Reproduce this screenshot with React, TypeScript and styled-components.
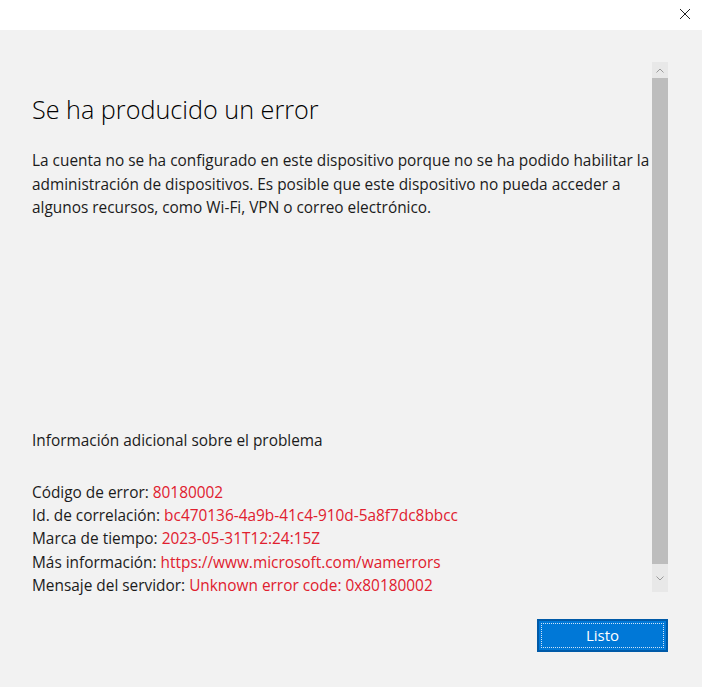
import styled, { createGlobalStyle } from 'styled-components'

const GlobalStyle = createGlobalStyle`
  html, body {
    margin: 0;
    padding: 0;
    background: #f2f2f2;
  }
  body {
    font-family: 'Open Sans', 'Noto Sans', sans-serif;
    color: #1b1b1b;
  }
`

const Window = styled.div`
  width: 702px;
  height: 687px;
  display: flex;
  flex-direction: column;
  background: #f2f2f2;
  overflow: hidden;
`

const TitleBar = styled.div`
  height: 30px;
  flex: none;
  background: #ffffff;
  display: flex;
  justify-content: flex-end;
  align-items: center;
`

const CloseButton = styled.div`
  width: 34px;
  height: 30px;
  display: flex;
  align-items: center;
  justify-content: center;
  padding-bottom: 2px;
  box-sizing: border-box;
`

const Body = styled.div`
  flex: 1;
  display: flex;
  flex-direction: column;
  padding-top: 32px;
`

const ScrollRegion = styled.div`
  height: 540px;
  display: flex;
  align-items: flex-start;
  padding-right: 34px;
`

const Viewport = styled.div`
  flex: 1;
  min-width: 0;
  overflow: hidden;
  padding-left: 32px;
`

const Content = styled.div`
  width: 632px;
  padding-top: 31px;
`

const Heading = styled.h1`
  margin: 0;
  font-family: 'Open Sans', sans-serif;
  font-weight: 300;
  font-size: 25.2px;
  line-height: 32px;
  color: #000;
`

const Paragraph = styled.p`
  margin: 24px 0 0;
  font-size: 15.4px;
  line-height: 23.5px;
  color: #1b1b1b;
`

const Details = styled.div`
  margin-top: 209px;
  font-size: 15.4px;
  line-height: 23.3px;
`

const Subheading = styled.div`
  margin-bottom: 29px;
`

const Row = styled.div`
  white-space: nowrap;
`

const Value = styled.span`
  color: #e0202e;
`

const Scrollbar = styled.div`
  width: 16px;
  height: 530px;
  flex: none;
  display: flex;
  flex-direction: column;
  background: #ebebeb;
`

const Arrow = styled.div<{ $h: number }>`
  height: ${(p) => p.$h}px;
  display: flex;
  align-items: center;
  justify-content: center;
  background: #e8e8e8;
`

const Thumb = styled.div`
  flex: 1;
  background: #bdbdbd;
`

const Footer = styled.div`
  display: flex;
  justify-content: flex-end;
  padding: 17px 34px 0 0;
`

const PrimaryButton = styled.button`
  width: 131px;
  height: 33px;
  padding: 2px;
  border: 2px solid #005aa8;
  background: #0078d7;
  color: #ffffff;
  font-family: 'Open Sans', sans-serif;
  font-size: 15px;
  cursor: pointer;
  box-sizing: border-box;
  display: flex;
`

const FocusRect = styled.span`
  flex: 1;
  border: 1px dotted #cfe3f7;
  display: flex;
  align-items: center;
  justify-content: center;
  padding-bottom: 1px;
`

const rows: [string, string][] = [
  ['Código de error: ', '80180002'],
  ['Id. de correlación: ', 'bc470136-4a9b-41c4-910d-5a8f7dc8bbcc'],
  ['Marca de tiempo: ', '2023-05-31T12:24:15Z'],
  ['Más información: ', 'https://www.microsoft.com/wamerrors'],
  ['Mensaje del servidor: ', 'Unknown error code: 0x80180002'],
]

const App = () => {
  return (
    <>
      <GlobalStyle />
      <Window>
        <TitleBar>
          <CloseButton>
            <svg width="12" height="12" viewBox="0 0 12 12">
              <path d="M1 1 L11 11 M11 1 L1 11" stroke="#222" strokeWidth="1" fill="none" />
            </svg>
          </CloseButton>
        </TitleBar>
        <Body>
          <ScrollRegion>
            <Viewport>
              <Content>
                <Heading>Se ha producido un error</Heading>
                <Paragraph>
                  La cuenta no se ha configurado en este dispositivo porque no se ha podido habilitar la
                  administración de dispositivos. Es posible que este dispositivo no pueda acceder a
                  algunos recursos, como Wi-Fi, VPN o correo electrónico.
                </Paragraph>
                <Details>
                  <Subheading>Información adicional sobre el problema</Subheading>
                  {rows.map(([label, value]) => (
                    <Row key={label}>
                      {label}
                      <Value>{value}</Value>
                    </Row>
                  ))}
                </Details>
              </Content>
            </Viewport>
            <Scrollbar>
              <Arrow $h={16}>
                <svg width="8" height="5" viewBox="0 0 8 5">
                  <path d="M0.5 4.5 L4 1 L7.5 4.5" stroke="#9a9a9a" strokeWidth="1" fill="none" />
                </svg>
              </Arrow>
              <Thumb />
              <Arrow $h={28}>
                <svg width="8" height="5" viewBox="0 0 8 5">
                  <path d="M0.5 0.5 L4 4 L7.5 0.5" stroke="#9a9a9a" strokeWidth="1" fill="none" />
                </svg>
              </Arrow>
            </Scrollbar>
          </ScrollRegion>
          <Footer>
            <PrimaryButton>
              <FocusRect>Listo</FocusRect>
            </PrimaryButton>
          </Footer>
        </Body>
      </Window>
    </>
  )
}

export default App
